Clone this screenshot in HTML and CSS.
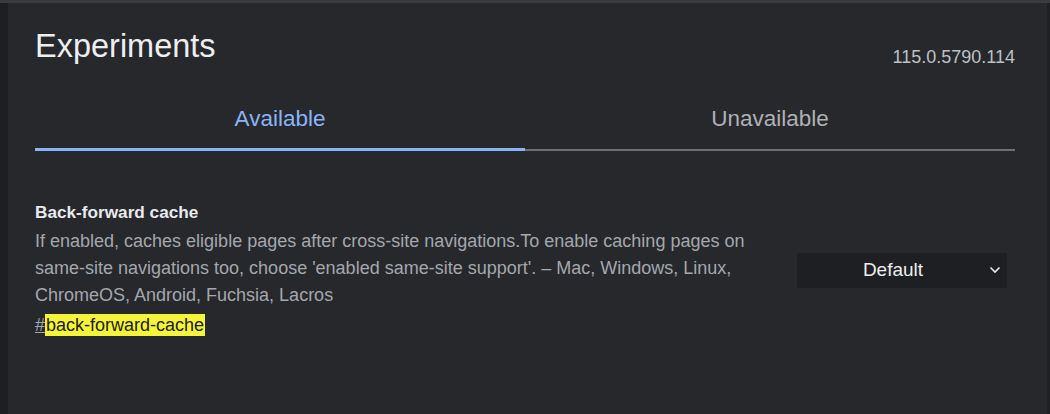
FILE: index.html
```html
<!DOCTYPE html>
<html>
<head>
<meta charset="utf-8">
<link rel="stylesheet" href="styles.css">
</head>
<body>
<div class="topbar"></div>
<div class="frame">
  <div class="gutter-left"></div>
  <main class="panel">
    <header class="title-row">
      <h1 class="title">Experiments</h1>
      <span class="version">115.0.5790.114</span>
    </header>
    <nav class="tabs">
      <div class="tab tab-active">Available</div>
      <div class="tab">Unavailable</div>
    </nav>
    <section class="experiment">
      <div class="exp-text">
        <h2 class="exp-name">Back-forward cache</h2>
        <p class="exp-desc">If enabled, caches eligible pages after cross-site navigations.To enable caching pages on same-site navigations too, choose 'enabled same-site support'. – Mac, Windows, Linux, ChromeOS, Android, Fuchsia, Lacros</p>
        <p class="exp-link"><a class="hash">#</a><span class="mark">back-forward-cache</span></p>
      </div>
      <div class="exp-control">
        <div class="select">
          <span class="select-label">Default</span>
          <svg class="chev" width="12" height="8" viewBox="0 0 12 8"><path d="M1.5 1.5 L6 6 L10.5 1.5" fill="none" stroke="#e8eaed" stroke-width="1.6"/></svg>
        </div>
      </div>
    </section>
  </main>
  <div class="gutter-right"></div>
</div>
</body>
</html>
```

FILE: styles.css
```css
html, body {
  margin: 0;
  padding: 0;
  height: 100%;
}
body {
  background: #1f2023;
  font-family: "Liberation Sans", Arial, sans-serif;
  color: #e8eaed;
  display: flex;
  flex-direction: column;
  overflow: hidden;
}
.topbar {
  height: 3px;
  background: #3a3b3e;
  flex: none;
}
.frame {
  flex: 1;
  display: flex;
  min-width: 0;
}
.gutter-left {
  width: 8px;
  flex: none;
  background: #1e1f22;
}
.gutter-right {
  width: 3px;
  flex: none;
  background: #1f2023;
}
.panel {
  flex: 1;
  min-width: 0;
  background: #27282c;
  padding: 0 32px 0 27px;
}
.title-row {
  display: flex;
  justify-content: space-between;
  align-items: flex-end;
  height: 66px;
}
.title {
  margin: 0;
  font-weight: 400;
  font-size: 32.5px;
  line-height: 38px;
  color: #eceef0;
  padding-bottom: 4px;
}
.version {
  font-size: 18px;
  line-height: 20px;
  color: #bdc1c6;
  padding-bottom: 2px;
}
.tabs {
  display: flex;
  margin-top: 37px;
}
.tab {
  flex: 1;
  text-align: center;
  font-size: 22.5px;
  line-height: 26px;
  color: #aeb1b6;
  padding-bottom: 17px;
  border-bottom: 2px solid #6e7074;
}
.tab-active {
  color: #8ab4f8;
  border-bottom: 3px solid #8ab4f8;
  padding-bottom: 16px;
}
.experiment {
  display: flex;
  align-items: center;
  margin-top: 50px;
}
.exp-text {
  flex: 1;
  min-width: 0;
}
.exp-name {
  margin: 0;
  font-size: 17.2px;
  line-height: 22px;
  font-weight: 700;
  color: #e8eaed;
}
.exp-desc {
  margin: 5px 0 0;
  font-size: 18px;
  line-height: 27px;
  color: #a4a7ac;
  max-width: 730px;
}
.exp-link {
  margin: 3px 0 0;
  font-size: 18px;
  line-height: 27px;
  color: #a4a7ac;
}
.hash {
  text-decoration: underline;
  color: #a4a7ac;
}
.mark {
  background: #f4f53a;
  color: #1f2023;
  padding: 1px 1px;
}
.exp-control {
  flex: none;
  margin-right: 8px;
}
.select {
  width: 210px;
  height: 35px;
  background: #1e1f22;
  display: flex;
  align-items: center;
  box-sizing: border-box;
  padding: 0 6px 0 0;
}
.select-label {
  flex: 1;
  text-align: center;
  font-size: 19px;
  color: #eceef0;
}
.chev {
  flex: none;
}
```
